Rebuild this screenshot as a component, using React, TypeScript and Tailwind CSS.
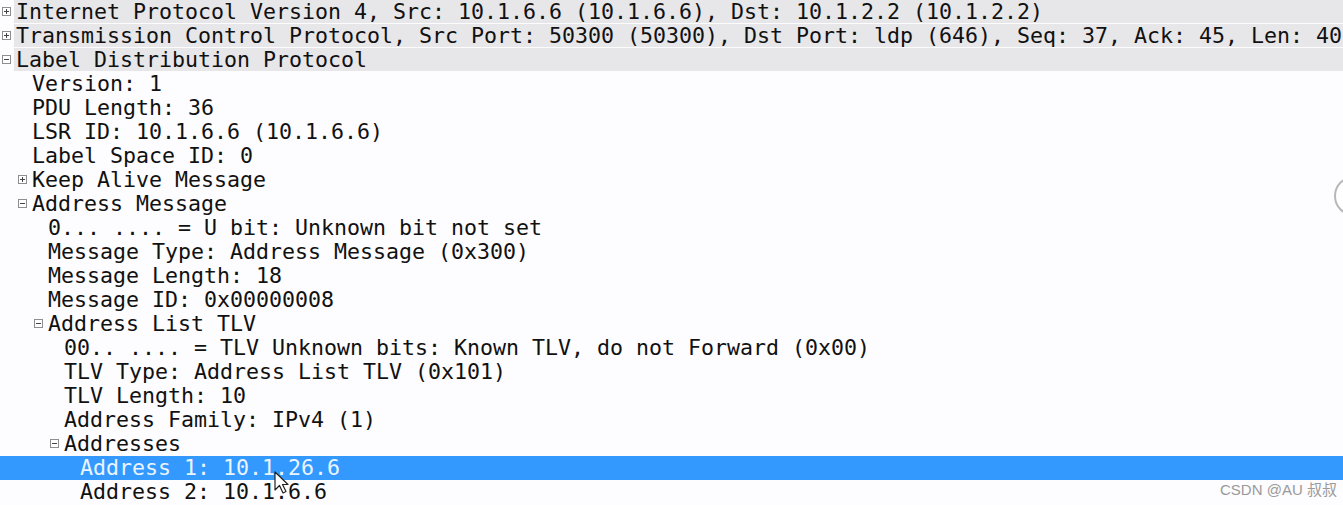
import React from "react";

type Row = { level: number; text: string; exp?: "+" | "-"; gray?: boolean; sel?: boolean };

const rows: Row[] = [
  { level: 0, exp: "+", gray: true, text: "Internet Protocol Version 4, Src: 10.1.6.6 (10.1.6.6), Dst: 10.1.2.2 (10.1.2.2)" },
  { level: 0, exp: "+", gray: true, text: "Transmission Control Protocol, Src Port: 50300 (50300), Dst Port: ldp (646), Seq: 37, Ack: 45, Len: 40" },
  { level: 0, exp: "-", gray: true, text: "Label Distribution Protocol" },
  { level: 1, text: "Version: 1" },
  { level: 1, text: "PDU Length: 36" },
  { level: 1, text: "LSR ID: 10.1.6.6 (10.1.6.6)" },
  { level: 1, text: "Label Space ID: 0" },
  { level: 1, exp: "+", text: "Keep Alive Message" },
  { level: 1, exp: "-", text: "Address Message" },
  { level: 2, text: "0... .... = U bit: Unknown bit not set" },
  { level: 2, text: "Message Type: Address Message (0x300)" },
  { level: 2, text: "Message Length: 18" },
  { level: 2, text: "Message ID: 0x00000008" },
  { level: 2, exp: "-", text: "Address List TLV" },
  { level: 3, text: "00.. .... = TLV Unknown bits: Known TLV, do not Forward (0x00)" },
  { level: 3, text: "TLV Type: Address List TLV (0x101)" },
  { level: 3, text: "TLV Length: 10" },
  { level: 3, text: "Address Family: IPv4 (1)" },
  { level: 3, exp: "-", text: "Addresses" },
  { level: 4, sel: true, text: "Address 1: 10.1.26.6" },
  { level: 4, text: "Address 2: 10.1.6.6" },
];

function Box({ kind }: { kind: "+" | "-" }) {
  return (
    <svg width="9" height="9" viewBox="0 0 9 9" className="shrink-0">
      <rect x="0.5" y="0.5" width="8" height="8" fill="#ffffff" stroke="#8e8e8e" />
      <line x1="2" y1="4.5" x2="7" y2="4.5" stroke="#444" />
      {kind === "+" && <line x1="4.5" y1="2" x2="4.5" y2="7" stroke="#444" />}
    </svg>
  );
}

const pads = ["pl-[2px]", "pl-[18px]", "pl-[34px]", "pl-[50px]", "pl-[66px]"];

export default function App() {
  return (
    <div className="relative w-[1343px] h-[505px] overflow-hidden bg-[#fdfcfe]">
      <div
        className="flex flex-col text-[21.6px] leading-[24px] text-[#111111]"
        style={{ fontFamily: '"DejaVu Sans Mono", "Liberation Mono", monospace' }}
      >
        {rows.map((r, i) => (
          <div key={i} className={`h-[24px] flex items-start ${r.sel ? "bg-[#3399ff]" : ""}`}>
            <div className={`flex items-start h-[23px] w-full ${pads[r.level]}`}>
              <div className="w-[9px] h-[23px] flex items-center shrink-0">
                {r.exp && <Box kind={r.exp} />}
              </div>
              <div
                className={`ml-[3px] pl-[2px] h-[23px] flex-1 whitespace-pre overflow-hidden ${
                  r.gray ? "bg-[#e7e6e9]" : ""
                } ${r.sel ? "text-[#eaf5ff]" : ""}`}
              >
                {r.text}
              </div>
            </div>
          </div>
        ))}
      </div>

      <div className="absolute left-[1334px] top-[176px] w-[40px] h-[40px] rounded-full border-2 border-[#b8b8b8] bg-white" />

      <svg className="absolute left-[274px] top-[471px]" width="16" height="26" viewBox="0 0 16 26">
        <path d="M1 1 L1 19 L5.5 14.5 L9 22 L12 20.5 L8.5 13.5 L14 13.5 Z" fill="#ffffff" stroke="#222" strokeWidth="1.2" strokeLinejoin="round" />
      </svg>

      <div
        className="absolute left-[1220px] top-[480px] text-[15px] leading-[20px] text-[#9a9a9a]"
        style={{ fontFamily: 'Arial, "Liberation Sans", "Noto Sans CJK SC", sans-serif' }}
      >
        CSDN @AU 叔叔
      </div>
    </div>
  );
}
